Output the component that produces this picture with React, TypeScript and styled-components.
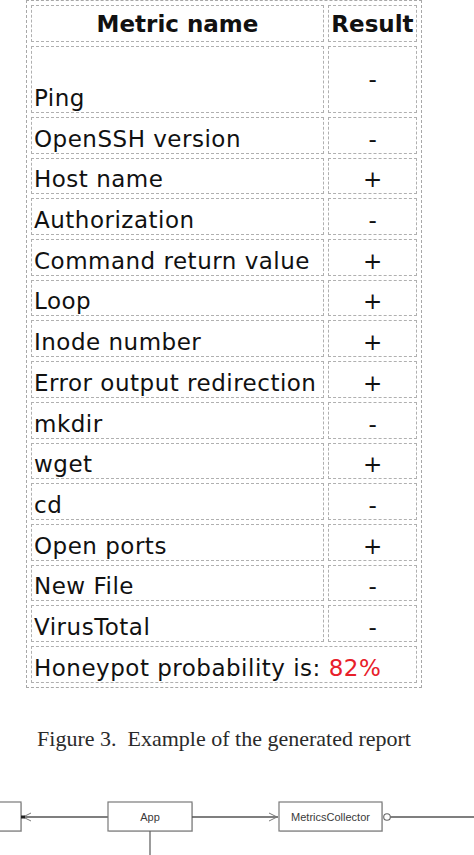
import React from 'react';
import styled, { createGlobalStyle } from 'styled-components';

const GlobalStyle = createGlobalStyle`
  html, body {
    margin: 0;
    padding: 0;
    background: #ffffff;
  }
`;

const Page = styled.div`
  width: 474px;
  height: 855px;
  overflow: hidden;
`;

const Figure = styled.figure`
  margin: 0 0 0 26px;
  width: 396px;
`;

const ReportTable = styled.table`
  width: 396px;
  table-layout: fixed;
  border: 1px dashed #a8a8a8;
  border-collapse: separate;
  border-spacing: 4px;
  font-family: "DejaVu Sans", Verdana, sans-serif;
  font-size: 23px;
  letter-spacing: 0.5px;
  color: #111;
`;

const HeadCell = styled.th`
  border: 1px dashed #b0b0b0;
  padding: 0 1px;
  height: 35px;
  font-weight: bold;
  letter-spacing: 0;
  text-align: center;
  vertical-align: middle;
  white-space: nowrap;
`;

const Cell = styled.td<{ $center?: boolean; $middle?: boolean; $tall?: boolean }>`
  border: 1px dashed #b0b0b0;
  padding: 0 1px 1px 2px;
  height: ${(p) => (p.$tall ? '64px' : '33.7px')};
  text-align: ${(p) => (p.$center ? 'center' : 'left')};
  vertical-align: ${(p) => (p.$middle ? 'middle' : 'bottom')};
  white-space: nowrap;
  line-height: 26px;
`;

const Percent = styled.span`
  color: #e8202a;
`;

const Caption = styled.figcaption`
  margin-top: 38px;
  text-align: center;
  font-family: "Liberation Serif", "Times New Roman", serif;
  font-size: 22px;
  color: #2a2a2a;
  white-space: pre;
`;

const Diagram = styled.svg`
  display: block;
  margin-top: 36px;
`;

const metrics: { name: string; result: string }[] = [
  { name: 'OpenSSH version', result: '-' },
  { name: 'Host name', result: '+' },
  { name: 'Authorization', result: '-' },
  { name: 'Command return value', result: '+' },
  { name: 'Loop', result: '+' },
  { name: 'Inode number', result: '+' },
  { name: 'Error output redirection', result: '+' },
  { name: 'mkdir', result: '-' },
  { name: 'wget', result: '+' },
  { name: 'cd', result: '-' },
  { name: 'Open ports', result: '+' },
  { name: 'New File', result: '-' },
  { name: 'VirusTotal', result: '-' },
];

const ClassBox: React.FC<{ x: number; w: number; label: string }> = ({ x, w, label }) => (
  <g>
    <rect x={x + 1} y={15} width={w} height={29} fill="#d8d8d8" />
    <rect x={x} y={14} width={w} height={29} fill="#fff" stroke="#7a7a7a" strokeWidth={1.2} />
    <text
      x={x + w / 2}
      y={33}
      textAnchor="middle"
      fontFamily="'Liberation Sans', Arial, sans-serif"
      fontSize={11}
      fill="#3a3a3a"
    >
      {label}
    </text>
  </g>
);

const App: React.FC = () => {
  return (
    <Page>
      <GlobalStyle />
      <Figure>
        <ReportTable>
          <colgroup>
            <col style={{ width: 293 }} />
            <col />
          </colgroup>
          <thead>
            <tr>
              <HeadCell>Metric name</HeadCell>
              <HeadCell>Result</HeadCell>
            </tr>
          </thead>
          <tbody>
            <tr>
              <Cell $tall>Ping</Cell>
              <Cell $tall $center $middle>-</Cell>
            </tr>
            {metrics.map((m) => (
              <tr key={m.name}>
                <Cell>{m.name}</Cell>
                <Cell $center>{m.result}</Cell>
              </tr>
            ))}
            <tr>
              <Cell colSpan={2}>
                Honeypot probability is: <Percent>82%</Percent>
              </Cell>
            </tr>
          </tbody>
        </ReportTable>
        <Caption>{'Figure 3.  Example of the generated report'}</Caption>
      </Figure>
      <Diagram width={474} height={70} viewBox="0 0 474 70">
        <ClassBox x={-20} w={41} label="" />
        <line x1={108} y1={29} x2={22} y2={29} stroke="#555" strokeWidth={1.3} />
        <polyline points="31,25 23,29 31,33" fill="none" stroke="#777" strokeWidth={1} />
        <rect x={21} y={27.5} width={4} height={3} fill="#222" />
        <ClassBox x={108} w={84} label="App" />
        <line x1={192} y1={29} x2={278} y2={29} stroke="#555" strokeWidth={1.3} />
        <polyline points="269,25 277,29 269,33" fill="none" stroke="#777" strokeWidth={1} />
        <ClassBox x={279} w={103} label="MetricsCollector" />
        <circle cx={387} cy={29} r={3.3} fill="#fff" stroke="#666" strokeWidth={1.1} />
        <line x1={390.5} y1={29} x2={474} y2={29} stroke="#555" strokeWidth={1.3} />
        <line x1={150} y1={43} x2={150} y2={70} stroke="#666" strokeWidth={1.3} />
      </Diagram>
    </Page>
  );
};

export default App;
